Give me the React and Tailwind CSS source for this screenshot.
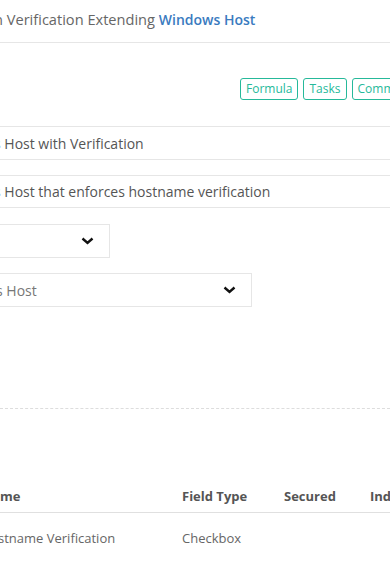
import React from "react";

const font = { fontFamily: "'Open Sans', 'Noto Sans', sans-serif" };

const Chevron = () => (
  <svg width="13" height="8" viewBox="0 0 13 8" className="shrink-0">
    <polyline points="1.5,1.5 6.5,6 11.5,1.5" fill="none" stroke="#111" strokeWidth="2.4" />
  </svg>
);

const TagButton = ({ children }) => (
  <span className="h-[22px] px-[5px] flex items-center border border-[#26b99a] rounded-[3px] text-[12px] text-[#26b99a] bg-white whitespace-nowrap">
    {children}
  </span>
);

export default function App() {
  return (
    <div className="w-[390px] h-[568px] overflow-hidden bg-white" style={font}>
      <div className="w-[390px]">
        {/* Title */}
        <div className="h-[43px] pt-[9px] border-b border-[#e6e6e6] whitespace-nowrap text-[14px] leading-[20px] text-[#666] overflow-hidden">
          <span className="-ml-[6px] text-[14.6px]">n Verification Extending </span>
          <span className="text-[#3a7bbf] font-semibold">Windows Host</span>
        </div>

        {/* Action buttons */}
        <div className="mt-[35px] pl-[240px] flex gap-[5px]">
          <TagButton>Formula</TagButton>
          <TagButton>Tasks</TagButton>
          <TagButton>Comments</TagButton>
        </div>

        {/* Fields */}
        <div className="mt-[26px] h-[34px] border-y border-[#e6e6e6] flex items-center whitespace-nowrap text-[14px] text-[#555]">
          <span className="-ml-[6px]">s Host with Verification</span>
        </div>
        <div className="mt-[15px] h-[33px] border-y border-[#e6e6e6] flex items-center whitespace-nowrap text-[14px] text-[#555]">
          <span className="-ml-[6px]">s Host that enforces hostname verification</span>
        </div>

        <div className="mt-[16px] w-[110px] h-[34px] border-y border-r border-[#e6e6e6] flex items-center justify-end pr-[15px]">
          <Chevron />
        </div>
        <div className="mt-[15px] w-[252px] h-[34px] border-y border-r border-[#e6e6e6] flex items-center justify-between pr-[15px] whitespace-nowrap text-[14px] text-[#777]">
          <span className="-ml-[4px]">s Host</span>
          <Chevron />
        </div>

        {/* Divider */}
        <div className="mt-[101px] border-t border-dashed border-[#dddddd]" />

        {/* Table */}
        <div className="mt-[78px] grid grid-cols-[182px_102px_86px_1fr] border-b border-[#e0e0e0] pb-[7px] text-[13px] leading-[18px] font-bold text-[#555] whitespace-nowrap">
          <span>me</span>
          <span>Field Type</span>
          <span>Secured</span>
          <span>Index</span>
        </div>
        <div className="pt-[16px] grid grid-cols-[182px_102px_86px_1fr] text-[13px] leading-[18px] text-[#666] whitespace-nowrap">
          <span className="-ml-[2px]">stname Verification</span>
          <span>Checkbox</span>
          <span></span>
          <span></span>
        </div>
      </div>
    </div>
  );
}
